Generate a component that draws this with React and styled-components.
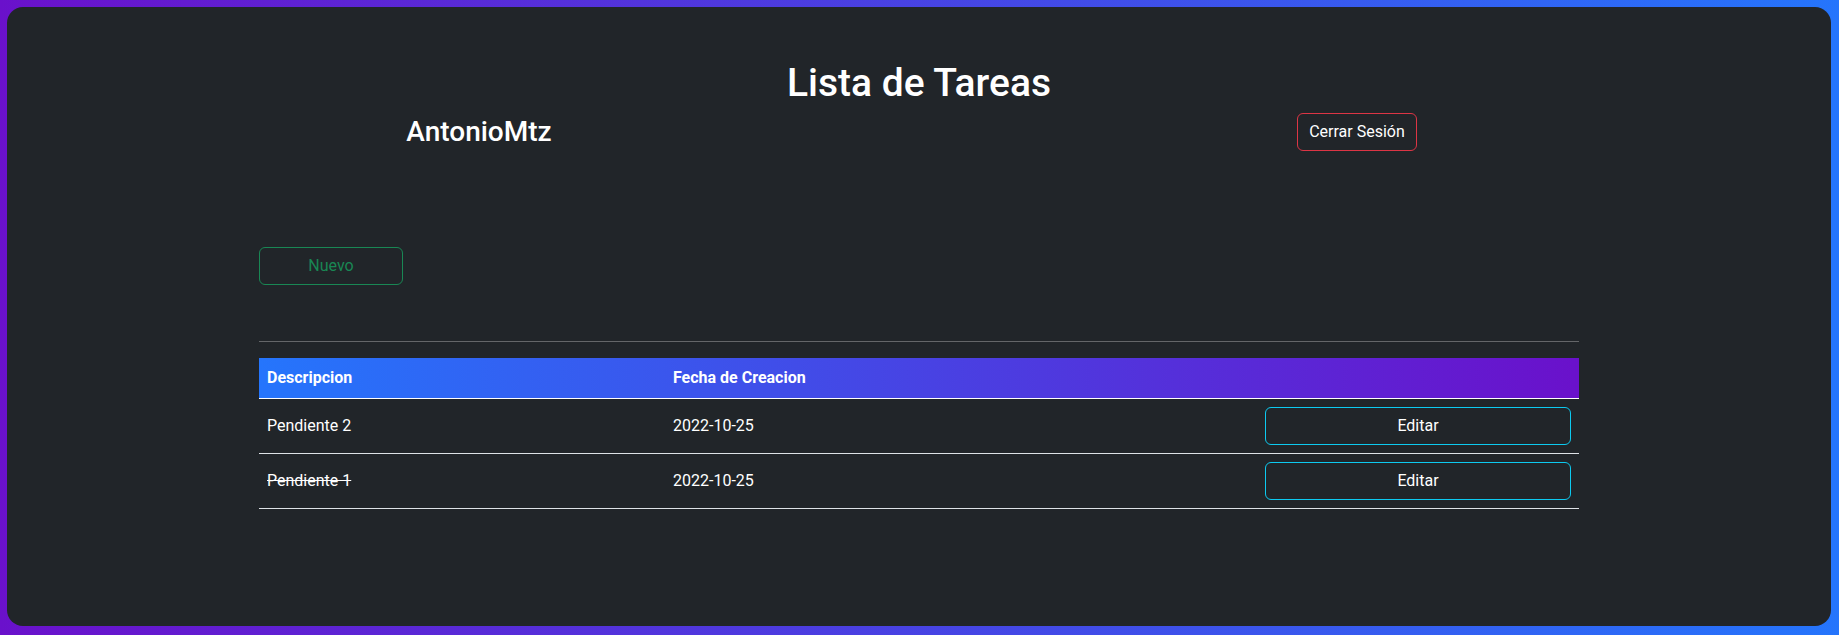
import React from 'react'
import styled, { createGlobalStyle } from 'styled-components'

const GlobalStyle = createGlobalStyle`
  * {
    box-sizing: border-box;
  }
  html, body {
    margin: 0;
    height: 635px;
  }
  body {
    padding: 7px 8px 9px 7px;
    background: linear-gradient(to right, #6a11cb, #2575fc);
    font-family: Roboto, "Noto Sans", sans-serif;
    color: #fff;
  }
`

const tareas = [
  { id: 2, descripcion: 'Pendiente 2', fecha: '2022-10-25', hecha: false },
  { id: 1, descripcion: 'Pendiente 1', fecha: '2022-10-25', hecha: true }
]

const Card = styled.main`
  height: 619px;
  background: #212529;
  border-radius: 16px;
  padding-top: 52px;
`

const Container = styled.div`
  width: 1320px;
  margin: 0 auto;
`

const Title = styled.h1`
  margin: 0 0 6px;
  font-size: 39px;
  line-height: 48px;
  font-weight: 500;
  text-align: center;
`

const UserRow = styled.div`
  display: grid;
  grid-template-columns: repeat(3, 440px);
  align-items: center;
  justify-items: center;
`

const UserName = styled.h3`
  margin: 0;
  font-size: 28px;
  line-height: 34px;
  font-weight: 500;
`

const OutlineBtn = styled.button`
  font-family: inherit;
  font-size: 16px;
  line-height: 24px;
  padding: 6px ${(p) => p.$pad || '12px'};
  background: transparent;
  border: 1px solid ${(p) => p.$color};
  border-radius: 6px;
  color: ${(p) => p.$text || '#fff'};
  cursor: pointer;
  width: ${(p) => p.$width || 'auto'};
`

const LogoutBtn = styled(OutlineBtn)`
  margin-right: 4px;
`

const Toolbar = styled.div`
  margin-top: 96px;
  display: flex;
`

const Divider = styled.hr`
  margin: 56px 0 16px;
  border: 0;
  border-top: 1px solid rgba(255, 255, 255, 0.3);
`

const Table = styled.table`
  width: 100%;
  border-collapse: collapse;
  font-size: 16px;
  line-height: 24px;
`

const HeadRow = styled.tr`
  background: linear-gradient(to right, #2575fc, #6a11cb);
  border-bottom: 1px solid #fff;
`

const Th = styled.th`
  text-align: left;
  font-weight: 700;
  padding: 8px;
  width: ${(p) => p.$w};
`

const Row = styled.tr`
  border-bottom: 1px solid #dee2e6;
`

const Td = styled.td`
  padding: 8px;
  text-decoration: ${(p) => (p.$done ? 'line-through' : 'none')};
`

export default function App() {
  return (
    <>
      <GlobalStyle />
      <Card>
        <Container>
          <Title>Lista de Tareas</Title>
          <UserRow>
            <UserName>AntonioMtz</UserName>
            <span />
            <LogoutBtn $color="#dc3545" $pad="11px">Cerrar Sesión</LogoutBtn>
          </UserRow>
          <Toolbar>
            <OutlineBtn $color="#198754" $text="#198754" $width="144px">
              Nuevo
            </OutlineBtn>
          </Toolbar>
          <Divider />
          <Table>
            <thead>
              <HeadRow>
                <Th $w="406px">Descripcion</Th>
                <Th $w="592px">Fecha de Creacion</Th>
                <Th />
              </HeadRow>
            </thead>
            <tbody>
              {tareas.map((t) => (
                <Row key={t.id}>
                  <Td $done={t.hecha}>{t.descripcion}</Td>
                  <Td>{t.fecha}</Td>
                  <Td>
                    <OutlineBtn $color="#0dcaf0" $width="100%">
                      Editar
                    </OutlineBtn>
                  </Td>
                </Row>
              ))}
            </tbody>
          </Table>
        </Container>
      </Card>
    </>
  )
}
